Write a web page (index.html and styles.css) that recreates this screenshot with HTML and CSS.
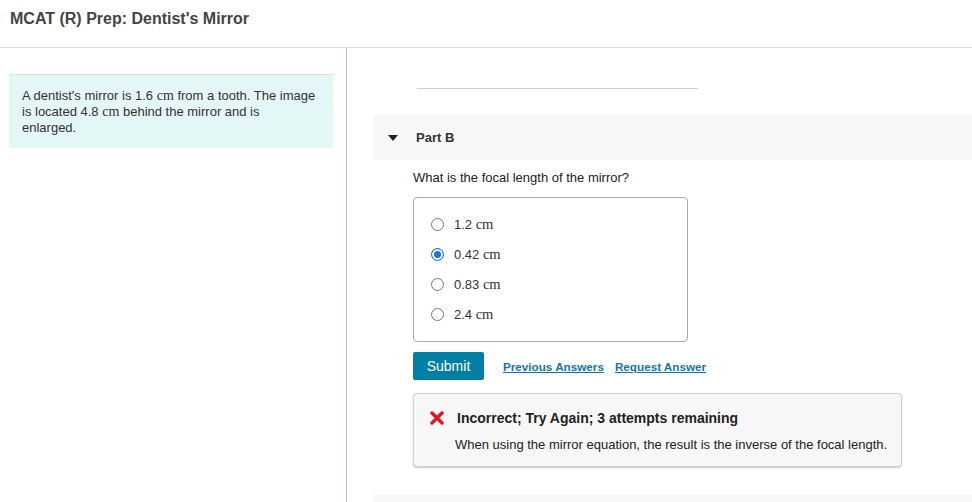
FILE: index.html
```html
<!DOCTYPE html>
<html lang="en">
<head>
    <meta charset="UTF-8">
    <title>MCAT (R) Prep: Dentist's Mirror</title>
    <link rel="stylesheet" href="styles.css">
</head>
<body>

<div class="header">
    <h1>MCAT (R) Prep: Dentist's Mirror</h1>
</div>

<div class="main">
    <div class="left">
        <div class="problem">
            A dentist's mirror is 1.6 <span class="m">cm</span> from a tooth. The image
            is located 4.8 <span class="m">cm</span> behind the mirror and is
            enlarged.
        </div>
    </div>

    <div class="right">
        <div class="sep"></div>

        <div class="part-head">
            <span class="caret"></span>
            <span class="part-title">Part B</span>
        </div>

        <div class="part-body">
            <p class="question">What is the focal length of the mirror?</p>

            <div class="choices">
                <label class="choice"><span class="radio"></span>1.2 <span class="m">cm</span></label>
                <label class="choice"><span class="radio on"></span>0.42 <span class="m">cm</span></label>
                <label class="choice"><span class="radio"></span>0.83 <span class="m">cm</span></label>
                <label class="choice"><span class="radio"></span>2.4 <span class="m">cm</span></label>
            </div>

            <div class="actions">
                <button class="submit">Submit</button>
                <a href="#" class="link">Previous Answers</a>
                <a href="#" class="link">Request Answer</a>
            </div>

            <div class="feedback">
                <div class="fb-title">
                    <svg class="xicon" width="14" height="14" viewBox="0 0 14 14">
                        <path d="M2 2 L12 12 M12 2 L2 12" stroke="#e8141d" stroke-width="3.4" stroke-linecap="round"/>
                    </svg>
                    Incorrect; Try Again; 3 attempts remaining
                </div>
                <div class="fb-text">When using the mirror equation, the result is the inverse of the focal length.</div>
            </div>
        </div>

        <div class="next-part"></div>
    </div>
</div>

</body>
</html>
```

FILE: styles.css
```css
body{
    margin: 0;
    font-family: "Liberation Sans", Arial, sans-serif;
    color: #222;
    background: #fff;
    overflow: hidden;
}

.header{
    height: 47px;
    border-bottom: 1px solid #dcdcdc;
}
.header h1{
    margin: 0;
    padding: 10px 0 0 10px;
    font-size: 16px;
    line-height: 18px;
    color: #444;
}

.main{
    display: flex;
    height: 454px;
}

.left{
    width: 347px;
    border-right: 1px solid #a9c5df;
    padding-top: 26px;
    box-sizing: border-box;
}
.problem{
    margin-left: 9px;
    width: 324px;
    box-sizing: border-box;
    background: #e3f7f6;
    border-top: 1px solid #d6e4e4;
    padding: 13px 17px 12px 13px;
    font-size: 13px;
    line-height: 16px;
    color: #333;
}
.m{
    font-family: "Liberation Serif", "Times New Roman", serif;
    font-size: 14px;
    line-height: 1;
}

.right{
    flex: 1;
    padding-left: 26px;
}
.sep{
    margin: 40px 0 0 44px;
    width: 281px;
    border-top: 1px solid #cfcfcf;
}

.part-head{
    margin-top: 26px;
    height: 45px;
    background: #f7f7f7;
    display: flex;
    align-items: center;
}
.caret{
    margin-left: 15px;
    width: 0;
    height: 0;
    border-left: 5px solid transparent;
    border-right: 5px solid transparent;
    border-top: 6px solid #222;
}
.part-title{
    margin-left: 18px;
    font-weight: bold;
    font-size: 13px;
    color: #333;
}

.part-body{
    padding-left: 40px;
}
.question{
    margin: 10px 0 0 0;
    font-size: 13px;
    line-height: 16px;
}

.choices{
    margin-top: 11px;
    width: 275px;
    height: 145px;
    box-sizing: border-box;
    border: 1px solid #a8a8a8;
    border-radius: 4px;
    padding: 11px 0 0 17px;
}
.choice{
    display: flex;
    align-items: center;
    height: 30px;
    font-size: 13px;
    color: #333;
    white-space: pre;
}
.choice .m{
    font-size: 14.5px;
}
.radio{
    width: 11px;
    height: 11px;
    border: 1px solid #777;
    border-radius: 50%;
    margin-right: 10px;
    box-sizing: content-box;
    background: #fff;
}
.radio.on{
    border: 1px solid #1a73e8;
    background: #1a73e8;
    box-shadow: inset 0 0 0 2px #fff;
}

.actions{
    margin-top: 10px;
    display: flex;
    align-items: center;
}
.submit{
    width: 71px;
    height: 28px;
    border: none;
    border-radius: 2px;
    background: #007ea4;
    color: #fff;
    font-family: "Liberation Sans", Arial, sans-serif;
    font-size: 14px;
    padding: 0;
}
.link{
    margin-left: 19px;
    font-size: 11.7px;
    font-weight: bold;
    color: #0f78a8;
    text-decoration: underline;
}
.link + .link{
    margin-left: 11px;
}

.feedback{
    margin-top: 13px;
    width: 489px;
    height: 74px;
    box-sizing: border-box;
    background: #f7f7f7;
    border: 1px solid #cfcfcf;
    border-radius: 4px;
    box-shadow: 0 1px 2px rgba(0,0,0,0.2);
    padding: 16px 0 0 16px;
}
.fb-title{
    display: flex;
    align-items: center;
    font-weight: bold;
    font-size: 14px;
    color: #222;
}
.xicon{
    margin-right: 13px;
}
.fb-text{
    margin: 11px 0 0 25px;
    font-size: 13px;
    color: #222;
}

.next-part{
    margin-top: 28px;
    height: 20px;
    background: #f7f7f7;
}
```
